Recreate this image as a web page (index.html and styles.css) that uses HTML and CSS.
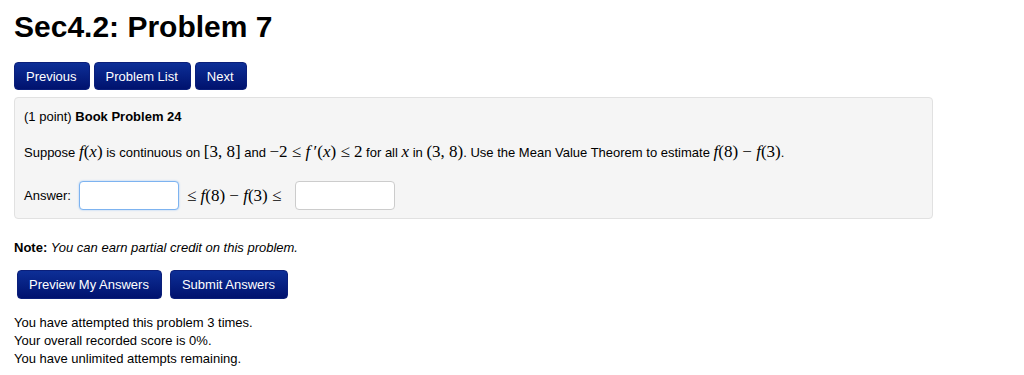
FILE: index.html
```html
<!DOCTYPE html>
<html lang="en">
<head>
    <meta charset="UTF-8">
    <title>Sec4.2: Problem 7</title>
    <link rel="stylesheet" href="styles.css">
</head>
<body>
<h1 class="page-title">Sec4.2: Problem 7</h1>

<!-- problem navigation -->
<div class="nav">
    <a class="btn" href="#">Previous</a>
    <a class="btn" href="#">Problem List</a>
    <a class="btn" href="#">Next</a>
</div>

<div class="problem">
    <p class="head">(1 point) <b>Book Problem 24</b></p>
    <p class="text">Suppose <span class="m"><i>f</i>(<i>x</i>)</span> is continuous on <span class="m">[3, 8]</span> and <span class="m">&minus;2 &le; <i>f</i>&thinsp;&prime;(<i>x</i>) &le; 2</span> for all <span class="m"><i>x</i></span> in <span class="m">(3, 8)</span>. Use the Mean Value Theorem to estimate <span class="m"><i>f</i>(8) &minus; <i>f</i>(3)</span>.</p>
    <div class="answer">
        <span>Answer:</span>
        <input class="ans focus" type="text">
        <span class="m">&le; <i>f</i>(8) &minus; <i>f</i>(3) &le;</span>
        <input class="ans" type="text">
    </div>
</div>

<p class="note"><b>Note:</b> <i>You can earn partial credit on this problem.</i></p>

<div class="submit">
    <button class="btn">Preview My Answers</button>
    <button class="btn">Submit Answers</button>
</div>

<div class="status">
    You have attempted this problem 3 times.<br>
    Your overall recorded score is 0%.<br>
    You have unlimited attempts remaining.
</div>
</body>
</html>
```

FILE: styles.css
```css
body {
    margin: 0;
    padding: 0 14px;
    font-family: "Liberation Sans", Arial, sans-serif;
    font-size: 13px;
    color: #000;
    background: #fff;
}

.page-title {
    margin: 0;
    padding-top: 9px;
    height: 53px;
    font-size: 30px;
    line-height: 36px;
    font-weight: bold;
}

/* dark blue buttons */
.btn {
    display: inline-block;
    padding: 0 12px 0 11px;
    height: 28px;
    line-height: 28px;
    font-family: "Liberation Sans", Arial, sans-serif;
    font-size: 13px;
    color: #fff;
    text-decoration: none;
    border: 1px solid #0b1f7a;
    border-radius: 4px;
    background: linear-gradient(#0d2f97, #00126e);
    box-sizing: border-box;
}

.nav {
    display: flex;
    gap: 4px;
}

.problem {
    margin-top: 7px;
    width: 919px;
    box-sizing: border-box;
    padding: 11px 9px 8px;
    background: #f5f5f5;
    border: 1px solid #e1e1e1;
    border-radius: 4px;
}

.problem p {
    margin: 0;
}

.head {
    line-height: 16px;
}

.text {
    margin-top: 16px !important;
    line-height: 22px;
}

.m {
    font-family: "Liberation Serif", "Times New Roman", serif;
    font-size: 17px;
}

.answer {
    display: flex;
    align-items: center;
    gap: 6px;
    margin-top: 17px;
}

.ans {
    width: 100px;
    height: 29px;
    box-sizing: border-box;
    border: 1px solid #ccc;
    border-radius: 4px;
    background: #fff;
    margin: 0 2px;
}

.ans + .m {
    margin-right: 6px;
}

.ans.focus {
    border-color: #7db3f0;
    box-shadow: 0 0 2px #9cc6f5;
}

.note {
    margin: 21px 0 0;
    line-height: 16px;
}

.submit {
    display: flex;
    gap: 8px;
    margin: 14px 0 0 3px;
}

.submit .btn {
    height: 29px;
    padding: 0 12px 0 11px;
}

.status {
    margin-top: 15px;
    line-height: 18px;
}
```
